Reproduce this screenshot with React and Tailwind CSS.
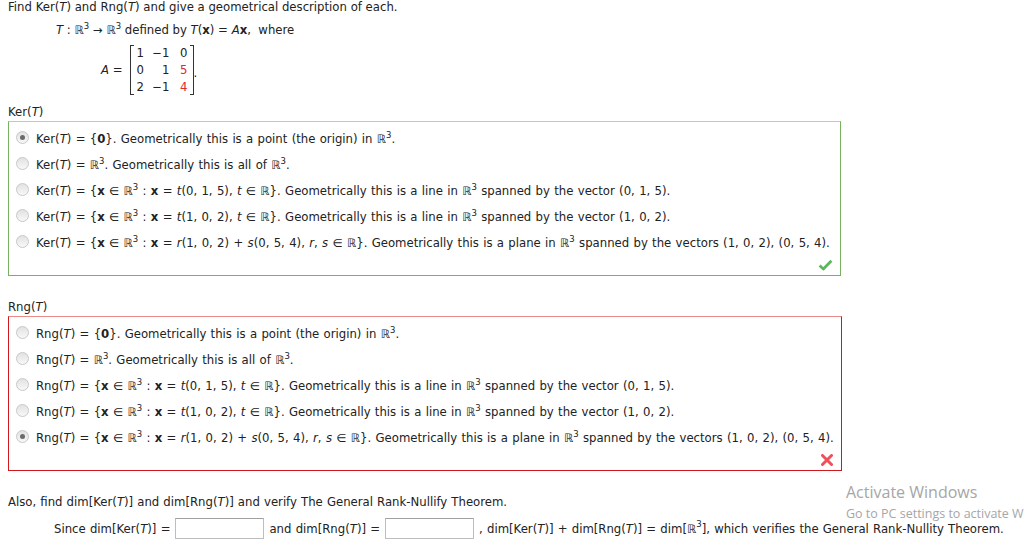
import React from 'react';

const R = () => <span className="font-['DejaVu_Sans']">ℝ</span>;
const T = () => <i>T</i>;
const sup3 = <sup className="text-[8.5px] -top-[0.6em]">3</sup>;

const Radio = ({ checked }) => (
  <span className="w-[13px] h-[13px] rounded-full border border-[#c8c8c8] bg-gradient-to-b from-[#e2e2e2] to-[#f8f8f8] flex items-center justify-center shrink-0 -mt-[3px]">
    {checked && <span className="w-[5px] h-[5px] rounded-full bg-[#6b6b6b]" />}
  </span>
);

const options = (name) => [
  <>{name}(<T />) = {'{'}<b>0</b>{'}'}. Geometrically this is a point (the origin) in <R />{sup3}.</>,
  <>{name}(<T />) = <R />{sup3}. Geometrically this is all of <R />{sup3}.</>,
  <>{name}(<T />) = {'{'}<b>x</b> ∈ <R />{sup3} : <b>x</b> = <i>t</i>(0, 1, 5), <i>t</i> ∈ <R />{'}'}. Geometrically this is a line in <R />{sup3} spanned by the vector (0, 1, 5).</>,
  <>{name}(<T />) = {'{'}<b>x</b> ∈ <R />{sup3} : <b>x</b> = <i>t</i>(1, 0, 2), <i>t</i> ∈ <R />{'}'}. Geometrically this is a line in <R />{sup3} spanned by the vector (1, 0, 2).</>,
  <>{name}(<T />) = {'{'}<b>x</b> ∈ <R />{sup3} : <b>x</b> = <i>r</i>(1, 0, 2) + <i>s</i>(0, 5, 4), <i>r</i>, <i>s</i> ∈ <R />{'}'}. Geometrically this is a plane in <R />{sup3} spanned by the vectors (1, 0, 2), (0, 5, 4).</>,
];

const Check = () => (
  <svg width="15" height="12" viewBox="0 0 14 11">
    <path d="M1.5 6 L5 9.2 L12.5 1.5" fill="none" stroke="#5cb85c" strokeWidth="2.6" strokeLinejoin="round" />
  </svg>
);

const Cross = () => (
  <svg width="12" height="12" viewBox="0 0 12 12">
    <path d="M1.5 1.5 L10.5 10.5 M10.5 1.5 L1.5 10.5" stroke="#f0505a" strokeWidth="3" strokeLinecap="round" />
  </svg>
);

const Box = ({ name, selected, good }) => (
  <div
    className={
      good
        ? 'mt-[2px] w-[833px] h-[155px] border border-[#77b263] border-t-[#b3d5a5] pl-[7px] pr-[7px] pt-[4px]'
        : 'mt-[2px] w-[834px] h-[155px] border border-[#d0191f] border-t-[#ec8a8a] pl-[7px] pr-[8px] pt-[4px]'
    }
  >
    {options(name).map((opt, i) => (
      <div key={i} className="h-[26px] flex items-center gap-[7px]">
        <Radio checked={i === selected} />
        <span className="whitespace-nowrap [word-spacing:0.6px]">{opt}</span>
      </div>
    ))}
    <div className="h-[18px] flex justify-end items-center">{good ? <Check /> : <Cross />}</div>
  </div>
);

const Input = () => (
  <span className="inline-block w-[89px] h-[21px] border border-[#bdbdbd] border-t-[#a0a0a0] bg-white mx-[5px]" />
);

export default function App() {
  return (
    <div className="relative w-[1024px] h-[549px] overflow-hidden bg-white pl-2 font-['DejaVu_Sans',sans-serif] text-[11.7px] leading-[14px] text-[#222]">
      <p>Find Ker(<T />) and Rng(<T />) and give a geometrical description of each.</p>
      <p className="mt-[9px] pl-[48px]">
        <T /> : <R />{sup3} → <R />{sup3} defined by <T />(<b>x</b>) = <i>A</i><b>x</b>,&nbsp; where
      </p>

      <div className="mt-[8px] pl-[93px] flex items-center h-[50px]">
        <span className="mr-[7px]"><i>A</i> =</span>
        <span className="w-[4px] h-[50px] border-l border-t border-b border-[#333]" />
        <div className="grid grid-cols-[13px_20px_18px] pl-[3px] pr-[2px] leading-[17px]">
          <span>1</span><span className="text-right">−1</span><span className="text-right">0</span>
          <span>0</span><span className="text-right">1</span><span className="text-right text-[#e0282c]">5</span>
          <span>2</span><span className="text-right">−1</span><span className="text-right text-[#e0282c]">4</span>
        </div>
        <span className="w-[4px] h-[50px] border-r border-t border-b border-[#333]" />
        <span className="self-center mt-[6px]">.</span>
      </div>

      <p className="mt-[10px]">Ker(<T />)</p>
      <Box name="Ker" selected={0} good />

      <p className="mt-[24px]">Rng(<T />)</p>
      <Box name="Rng" selected={4} />

      <p className="mt-[24px] [word-spacing:0.4px]">Also, find dim[Ker(<T />)] and dim[Rng(<T />)] and verify The General Rank-Nullify Theorem.</p>
      <div className="mt-[9px] pl-[46px] flex items-center h-[21px] whitespace-nowrap [word-spacing:0.5px]">
        <span>Since dim[Ker(<T />)] =</span>
        <Input />
        <span>and dim[Rng(<T />)] =</span>
        <Input />
        <span>, dim[Ker(<T />)] + dim[Rng(<T />)] = dim[<R />{sup3}], which verifies the General Rank-Nullity Theorem.</span>
      </div>

      <div className="absolute left-[846px] top-[482px] text-[#a6a6a6] font-['Open_Sans',sans-serif] whitespace-nowrap pointer-events-none">
        <div className="text-[16px] leading-[20px]">Activate Windows</div>
        <div className="text-[12.5px] leading-[17px] mt-[3px]">Go to PC settings to activate W</div>
      </div>
    </div>
  );
}
